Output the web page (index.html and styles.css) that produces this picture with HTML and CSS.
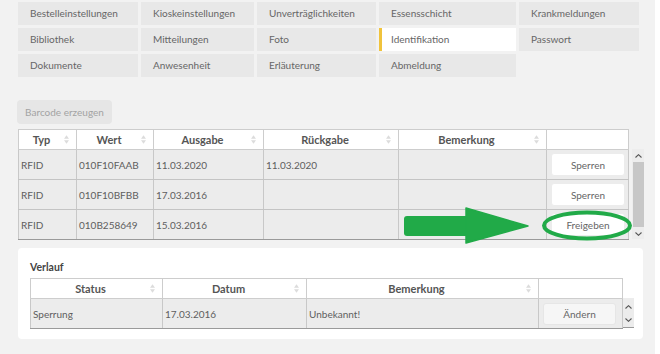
FILE: index.html
```html
<!DOCTYPE html>
<html lang="de">
<head>
<meta charset="utf-8">
<title>Identifikation</title>
<link rel="stylesheet" href="styles.css">
</head>
<body>
<div class="page">
  <nav class="tabs">
    <div class="tab">Bestelleinstellungen</div>
    <div class="tab">Kioskeinstellungen</div>
    <div class="tab">Unverträglichkeiten</div>
    <div class="tab">Essensschicht</div>
    <div class="tab">Krankmeldungen</div>
    <div class="tab">Bibliothek</div>
    <div class="tab">Mitteilungen</div>
    <div class="tab">Foto</div>
    <div class="tab active">Identifikation</div>
    <div class="tab">Passwort</div>
    <div class="tab">Dokumente</div>
    <div class="tab">Anwesenheit</div>
    <div class="tab">Erläuterung</div>
    <div class="tab">Abmeldung</div>
  </nav>

  <button class="barcode">Barcode erzeugen</button>

  <div class="gridwrap">
    <table class="grid g1">
      <colgroup>
        <col class="c-typ"><col class="c-wert"><col class="c-aus"><col class="c-rueck"><col class="c-bem"><col class="c-btn">
      </colgroup>
      <thead>
        <tr>
          <th><div class="th"><span class="lbl">Typ</span><svg class="sort" viewBox="0 0 6 10"><path d="M3 0 6 4H0zM3 10 0 6h6z"/></svg></div></th>
          <th><div class="th"><span class="lbl">Wert</span><svg class="sort" viewBox="0 0 6 10"><path d="M3 0 6 4H0zM3 10 0 6h6z"/></svg></div></th>
          <th><div class="th"><span class="lbl">Ausgabe</span><svg class="sort" viewBox="0 0 6 10"><path d="M3 0 6 4H0zM3 10 0 6h6z"/></svg></div></th>
          <th><div class="th"><span class="lbl">Rückgabe</span><svg class="sort" viewBox="0 0 6 10"><path d="M3 0 6 4H0zM3 10 0 6h6z"/></svg></div></th>
          <th><div class="th"><span class="lbl">Bemerkung</span><svg class="sort" viewBox="0 0 6 10"><path d="M3 0 6 4H0zM3 10 0 6h6z"/></svg></div></th>
          <th></th>
        </tr>
      </thead>
      <tbody>
        <tr><td>RFID</td><td>010F10FAAB</td><td>11.03.2020</td><td>11.03.2020</td><td></td><td><button class="rowbtn">Sperren</button></td></tr>
        <tr><td>RFID</td><td>010F10BFBB</td><td>17.03.2016</td><td></td><td></td><td><button class="rowbtn">Sperren</button></td></tr>
        <tr><td>RFID</td><td>010B258649</td><td>15.03.2016</td><td></td><td></td><td><button class="rowbtn">Freigeben</button></td></tr>
      </tbody>
    </table>
    <div class="vscroll v1">
      <svg class="chev" viewBox="0 0 7 4"><path d="M0.5 3.5 3.5 0.7 6.5 3.5"/></svg>
      <span class="thumb"></span>
      <svg class="chev" viewBox="0 0 7 4"><path d="M0.5 0.5 3.5 3.3 6.5 0.5"/></svg>
    </div>
  </div>

  <section class="card">
    <h2 class="card-title">Verlauf</h2>
    <div class="gridwrap2">
      <table class="grid g2">
        <colgroup>
          <col class="c-status"><col class="c-datum"><col class="c-bem2"><col class="c-btn2">
        </colgroup>
        <thead>
          <tr>
            <th><div class="th"><span class="lbl">Status</span><svg class="sort" viewBox="0 0 6 10"><path d="M3 0 6 4H0zM3 10 0 6h6z"/></svg></div></th>
            <th><div class="th"><span class="lbl">Datum</span><svg class="sort" viewBox="0 0 6 10"><path d="M3 0 6 4H0zM3 10 0 6h6z"/></svg></div></th>
            <th><div class="th"><span class="lbl">Bemerkung</span><svg class="sort" viewBox="0 0 6 10"><path d="M3 0 6 4H0zM3 10 0 6h6z"/></svg></div></th>
            <th></th>
          </tr>
        </thead>
        <tbody>
          <tr><td>Sperrung</td><td>17.03.2016</td><td>Unbekannt!</td><td><button class="rowbtn alt">Ändern</button></td></tr>
        </tbody>
      </table>
      <div class="vscroll v2">
        <svg class="chev" viewBox="0 0 7 4"><path d="M0.5 3.5 3.5 0.7 6.5 3.5"/></svg>
        <svg class="chev" viewBox="0 0 7 4"><path d="M0.5 0.5 3.5 3.3 6.5 0.5"/></svg>
      </div>
    </div>
  </section>

  <svg class="annot-arrow" viewBox="0 0 125 37" width="125" height="37">
    <rect x="0" y="9" width="66" height="20" rx="3" fill="#21aa48"/>
    <path d="M62 1 124 19 62 36Z" fill="#21aa48" stroke="#21aa48" stroke-width="1.5" stroke-linejoin="round"/>
  </svg>
  <svg class="annot-ring" viewBox="0 0 94 34" width="94" height="34">
    <ellipse cx="47" cy="16.5" rx="43" ry="13" fill="none" stroke="#21aa48" stroke-width="4"/>
  </svg>
</div>
</body>
</html>
```

FILE: styles.css
```css
html, body {
  margin: 0;
  padding: 0;
  background: #ffffff;
}

.page {
  position: relative;
  width: 655px;
  height: 354px;
  box-sizing: border-box;
  padding-top: 2px;
  background: #f2f2f2;
  font-family: Lato, "Open Sans", sans-serif;
  font-size: 10px;
  color: #666666;
  overflow: hidden;
}

.tabs {
  display: grid;
  grid-template-columns: 120px 113px 119px 137px 120px;
  grid-auto-rows: 23px;
  gap: 3px;
  margin-left: 18px;
}

.tab {
  background: #e8e8e8;
  padding-left: 12px;
  line-height: 23px;
  white-space: nowrap;
}

.tab.active {
  background: #ffffff;
  border-left: 3px solid #f0c33c;
  padding-left: 9px;
}

.barcode {
  display: block;
  margin: 23px 0 0 17px;
  width: 95px;
  height: 24px;
  padding: 0;
  border: 0;
  border-radius: 4px;
  background: #e6e6e6;
  color: #a3a3a3;
  font: inherit;
}

.gridwrap {
  display: flex;
  align-items: flex-start;
  margin: 5px 0 0 18px;
}

.grid {
  border-collapse: collapse;
  table-layout: fixed;
}

.g1 { width: 610px; }
.c-typ { width: 58px; }
.c-wert { width: 77px; }
.c-aus { width: 110px; }
.c-rueck { width: 135px; }
.c-bem { width: 148px; }
.c-btn { width: 82px; }

.grid th {
  height: 19px;
  padding: 0;
  background: #ffffff;
  border: 1px solid #cdcdcd;
  font-size: 11px;
  font-weight: 700;
  color: #555555;
}

.th {
  display: flex;
  align-items: center;
}

.lbl {
  flex: 1;
  text-align: center;
}

.sort {
  width: 5px;
  height: 9px;
  margin-right: 7px;
  fill: #dcdcdc;
}

.grid td {
  height: 29px;
  padding: 0 0 0 2px;
  background: #ececec;
  border-left: 1px solid #c8c8c8;
  border-right: 1px solid #c8c8c8;
  border-bottom: 1px solid #c4c4c4;
  color: #5e5e5e;
  white-space: nowrap;
}

.grid tbody tr:last-child td {
  border-bottom: 1px solid #9a9a9a;
}

.grid td:last-child {
  padding: 0 3px 0 4px;
}

.rowbtn {
  display: block;
  width: 100%;
  height: 23px;
  padding: 0;
  border: 1px solid #ececec;
  border-radius: 3px;
  background: #ffffff;
  color: #666666;
  font: inherit;
}

.rowbtn.alt {
  background: #f6f6f6;
  border-color: #e6e6e6;
  height: 22px;
}

.vscroll {
  display: flex;
  flex-direction: column;
  align-items: center;
}

.chev {
  width: 7px;
  height: 4px;
  fill: none;
  stroke: #555555;
  stroke-width: 1.1;
}

.v1 {
  width: 12px;
  height: 90px;
  margin: 20px 0 0 3px;
  background: #ededed;
}

.v1 .chev:first-child { margin-top: 5px; }
.v1 .thumb {
  width: 11px;
  height: 65px;
  margin-top: 4px;
  background: #c7c7c7;
}
.v1 .chev:last-child { margin-top: 5px; }

.card {
  width: 613px;
  height: 79px;
  margin: 8px 0 0 18px;
  padding: 12px 0 0 12px;
  background: #ffffff;
  border-radius: 4px;
}

.card-title {
  margin: 0 0 3px;
  font-size: 10.5px;
  line-height: 15px;
  font-weight: 700;
  color: #444444;
}

.gridwrap2 {
  display: flex;
  align-items: flex-start;
}

.g2 { width: 592px; }
.c-status { width: 132px; }
.c-datum { width: 144px; }
.c-bem2 { width: 232px; }
.c-btn2 { width: 84px; }

.g2 td:last-child {
  padding: 0 6px 0 4px;
}

.v2 {
  width: 11px;
  height: 30px;
  margin-top: 20px;
  box-sizing: border-box;
  padding-top: 7px;
  background: #ececec;
  border-bottom: 1px solid #9a9a9a;
  gap: 9px;
}

.annot-arrow {
  position: absolute;
  left: 404px;
  top: 207px;
}

.annot-ring {
  position: absolute;
  left: 540px;
  top: 209px;
}
```
